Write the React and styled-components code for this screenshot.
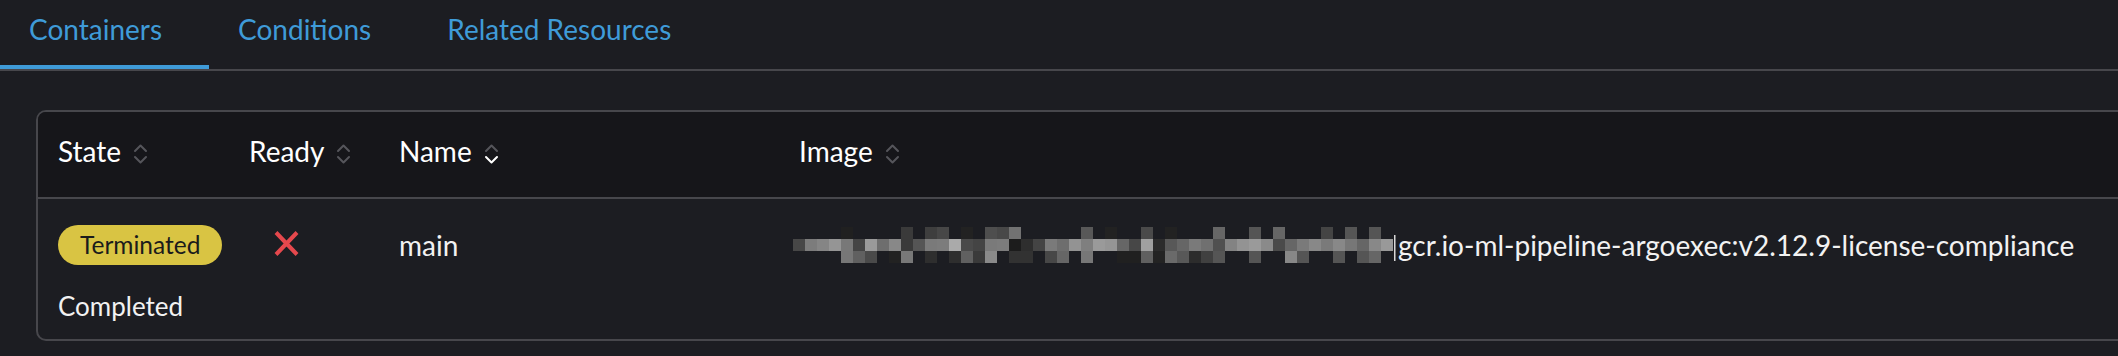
import React from 'react';
import styled, { createGlobalStyle } from 'styled-components';

const GlobalStyle = createGlobalStyle`
  html, body {
    margin: 0;
    background-color: #1c1d22;
    overflow: hidden;
  }
  body {
    font-family: Lato, "Open Sans", "Liberation Sans", sans-serif;
    color: #f2f2f2;
  }
`

const Page = styled.div`
  width: 100%;
  overflow: hidden;
`
const TabBar = styled.div`
  display: flex;
  border-bottom: 2px solid #47474c;
`
const Tab = styled.div`
  box-sizing: border-box;
  height: 69px;
  padding: 13px 47px 0 29px;
  font-size: 28px;
  line-height: 33px;
  color: #3f9bd8;
  border-bottom: 4px solid ${p => (p.$active ? '#3f9bd8' : 'transparent')};
  cursor: pointer;
`
const TableBox = styled.div`
  margin: 39px 0 0 36px;
  width: 2300px;
  border: 2px solid #47474c;
  border-radius: 10px;
  overflow: hidden;
`
const Row = styled.div`
  display: grid;
  grid-template-columns: 191px 150px 400px 1fr;
  padding-left: 20px;
`
const HeadRow = styled(Row)`
  box-sizing: border-box;
  height: 87px;
  padding-top: 21px;
  background-color: #16161a;
  border-bottom: 2px solid #47474c;
`
const BodyRow = styled(Row)`
  padding-top: 26px;
  padding-bottom: 16px;
`
const HeadCell = styled.div`
  display: flex;
  align-items: flex-start;
  gap: 12px;
  font-size: 28px;
  line-height: 36px;
  color: #ffffff;
`
const SortIcon = styled.svg`
  margin-top: 10px;
  flex-shrink: 0;
`
const Cell = styled.div`
  display: flex;
  flex-direction: column;
  align-items: flex-start;
  font-size: 28px;
  line-height: 40px;
`
const Badge = styled.span`
  display: inline-block;
  height: 40px;
  padding: 0 22px;
  border-radius: 20px;
  background-color: #d9c443;
  color: #1b1b1b;
  font-size: 24.5px;
  line-height: 40px;
`
const SubText = styled.div`
  margin-top: 24px;
  font-size: 26px;
  line-height: 34px;
`
const CrossBox = styled.div`
  display: flex;
  align-items: center;
  height: 40px;
  margin: -2px 0 0 25px;
`
const ImageLine = styled.div`
  display: flex;
  align-items: center;
  margin-left: -6px;
  white-space: nowrap;
`
const Mosaic = styled.svg`
  display: block;
  flex-shrink: 0;
  margin-right: 2px;
`

const Sort = ({ active }) => (
  <SortIcon width="15" height="22" viewBox="0 0 15 22" fill="none" strokeWidth="2" strokeLinecap="round" strokeLinejoin="round">
    <path d="M2 8 L7.5 2.5 L13 8" stroke="#55555b" />
    <path d="M2 14 L7.5 19.5 L13 14" stroke={active ? '#ffffff' : '#55555b'} />
  </SortIcon>
)

const Cross = () => (
  <svg width="25" height="25" viewBox="0 0 25 25" fill="none" stroke="#e5484d" strokeWidth="4" strokeLinecap="butt">
    <path d="M2 1.5 L23 23.5 M23 1.5 L2 23.5" />
  </svg>
)

// blurred registry prefix, 50 x 3 blocks of 12px
const top = { 4: '20', 9: '3a', 11: '3e', 12: '47', 14: '22', 16: '4e', 17: '48', 18: '72', 24: '58', 26: '22', 29: '4a', 31: '22', 35: '66', 38: '55', 40: '66', 44: '44', 46: '55', 48: '55' }
const mid = '47 7c 85 95 78 44 9a 6e 88 3a 55 7a 7c aa 4a 44 7a 7c 1c 2e 44 7a 6e 93 7f 9a 95 66 47 a0 2c 58 66 7a 70 50 83 93 9a 8a 4a 66 7a 88 7a 88 77 66 88 99'.split(' ')
const bottom = { 4: '77', 5: '60', 6: '4a', 8: '22', 9: '78', 11: '2e', 13: '2e', 14: '60', 15: '3a', 16: '8a', 18: '32', 19: '32', 21: '47', 22: '66', 24: '77', 27: '20', 28: '20', 29: '60', 30: '23', 31: '6a', 32: '58', 33: '2c', 34: '40', 35: '55', 38: '55', 41: '88', 42: '55', 45: '55', 47: '55', 48: '66' }

const Blur = () => (
  <Mosaic width="603" height="36" viewBox="0 0 603 36">
    {[top, mid, bottom].map((row, r) =>
      Array.from({ length: 50 }).map((_, c) =>
        row[c] ? <rect key={`${r}-${c}`} x={c * 12} y={r * 12} width="12" height="12" fill={`#${row[c]}${row[c]}${row[c]}`} /> : null
      )
    )}
    <rect x="601" y="8" width="1.5" height="26" fill="#d8d8d8" />
  </Mosaic>
)

const columns = [
  { label: 'State' },
  { label: 'Ready' },
  { label: 'Name', active: true },
  { label: 'Image' },
]

const App = () => (
  <Page>
    <GlobalStyle />
    <TabBar>
      <Tab $active>Containers</Tab>
      <Tab>Conditions</Tab>
      <Tab>Related Resources</Tab>
    </TabBar>
    <TableBox>
      <HeadRow>
        {columns.map(col => (
          <HeadCell key={col.label}>
            {col.label}
            <Sort active={col.active} />
          </HeadCell>
        ))}
      </HeadRow>
      <BodyRow>
        <Cell>
          <Badge>Terminated</Badge>
          <SubText>Completed</SubText>
        </Cell>
        <Cell>
          <CrossBox>
            <Cross />
          </CrossBox>
        </Cell>
        <Cell>main</Cell>
        <Cell>
          <ImageLine>
            <Blur />
            gcr.io-ml-pipeline-argoexec:v2.12.9-license-compliance
          </ImageLine>
        </Cell>
      </BodyRow>
    </TableBox>
  </Page>
)

export default App;
